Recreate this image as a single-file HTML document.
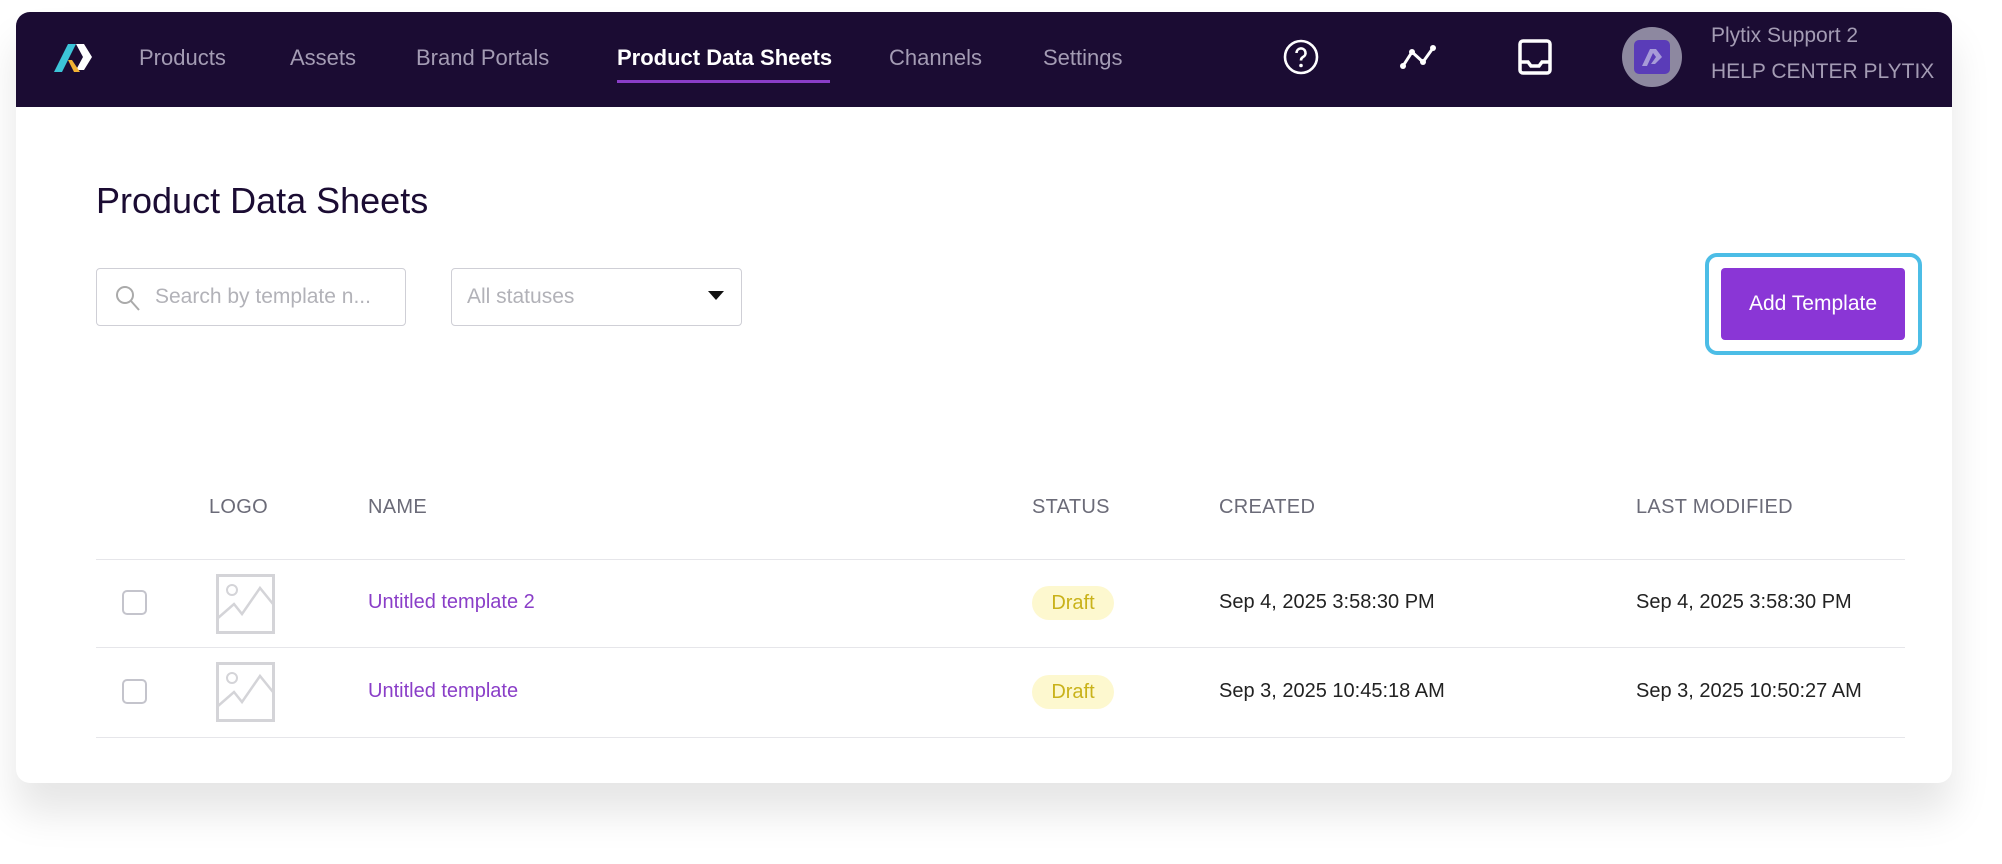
<!DOCTYPE html>
<html><head><meta charset="utf-8"><style>
*{box-sizing:border-box;margin:0;padding:0}
body{width:2002px;height:864px;background:#fff;font-family:"Liberation Sans",sans-serif;position:relative;overflow:hidden}
.card{position:absolute;left:16px;top:12px;width:1936px;height:771px;background:#fff;border-radius:14px;box-shadow:0 30px 40px rgba(0,0,0,0.10)}
.nav{position:absolute;left:16px;top:12px;width:1936px;height:95px;background:#1b0c33;border-radius:14px 14px 0 0}
.ab{position:absolute;white-space:nowrap}
.ni{font-size:22px;color:#a49cb4;top:45px}
.th{font-size:20px;color:#6b6b78;top:496px;letter-spacing:.3px}
.td{font-size:20px;color:#222;}
.line{position:absolute;left:96px;width:1809px;height:1px;background:#e6e6ea}
.cb{position:absolute;left:122px;width:25px;height:25px;border:2px solid #c4c4cc;border-radius:5px}
.draft{position:absolute;left:1032px;width:82px;height:34px;border-radius:17px;background:#fdf8cf;color:#c9b21a;font-size:20px;text-align:center;line-height:34px}
.lk{font-size:20px;color:#8a3ec8}
</style></head><body>
<div class="card"></div>
<div class="nav"></div>
<svg class="ab" style="left:52px;top:40px" width="42" height="34" viewBox="0 0 42 34"><path d="M2 32 L16 4 L24 4 L10 32Z" fill="#3cc4d8"/><path d="M24 4 L32 4 L40 17 L32 30 L24 30 L31 17Z" fill="#fff"/><path d="M16 20 L22 32 L28 32 L20 20Z" fill="#f2b233"/></svg>
<div class="ab ni" style="left:139px">Products</div>
<div class="ab ni" style="left:290px">Assets</div>
<div class="ab ni" style="left:416px">Brand Portals</div>
<div class="ab ni" style="left:617px;color:#fff;font-weight:bold">Product Data Sheets</div>
<div class="ab" style="left:617px;top:80px;width:213px;height:3px;background:#8a3ec8"></div>
<div class="ab ni" style="left:889px">Channels</div>
<div class="ab ni" style="left:1043px">Settings</div>
<svg class="ab" style="left:1282px;top:38px" width="38" height="38" viewBox="0 0 38 38"><circle cx="19" cy="19" r="16" fill="none" stroke="#fff" stroke-width="2.6"/><path d="M14.5 15a4.5 4.5 0 1 1 6.5 4c-1.5.8-2 1.8-2 3.5" fill="none" stroke="#fff" stroke-width="2.6"/><circle cx="19" cy="27.5" r="1.8" fill="#fff"/></svg>
<svg class="ab" style="left:1397px;top:40px" width="42" height="32" viewBox="0 0 42 32"><path d="M6 26 L15 12 L26 22 L36 8" fill="none" stroke="#fff" stroke-width="3" stroke-linejoin="round"/><circle cx="6" cy="26" r="3" fill="#fff"/><circle cx="15" cy="12" r="3" fill="#fff"/><circle cx="26" cy="22" r="3" fill="#fff"/><circle cx="36" cy="8" r="3" fill="#fff"/></svg>
<svg class="ab" style="left:1517px;top:38px" width="36" height="38" viewBox="0 0 36 38"><rect x="3" y="3" width="30" height="32" rx="3" fill="none" stroke="#fff" stroke-width="3.5"/><path d="M3 24h8l3 4h8l3-4h8" fill="none" stroke="#fff" stroke-width="3.5"/></svg>
<div class="ab" style="left:1622px;top:27px;width:60px;height:60px;border-radius:50%;background:#8d88a0"></div>
<div class="ab" style="left:1634px;top:40px;width:36px;height:34px;border-radius:5px;background:#5a3cb8"></div>
<svg class="ab" style="left:1640px;top:46px" width="24" height="22" viewBox="0 0 24 22"><path d="M2 20 L10 3 L16 3 L22 11 L15 18 L11 18 L16 11 L13 7 L7 20Z" fill="#a79bd8"/></svg>
<div class="ab" style="left:1711px;top:24px;font-size:21px;color:#a49cb4">Plytix Support 2</div>
<div class="ab" style="left:1711px;top:60px;font-size:21px;color:#a49cb4">HELP CENTER PLYTIX</div>

<div class="ab" style="left:96px;top:180px;font-size:36px;color:#1b0c33">Product Data Sheets</div>
<div class="ab" style="left:96px;top:268px;width:310px;height:58px;border:1px solid #cfcfd6;border-radius:4px"></div>
<svg class="ab" style="left:114px;top:284px" width="28" height="28" viewBox="0 0 28 28"><circle cx="11" cy="11" r="8" fill="none" stroke="#aaa" stroke-width="2"/><path d="M17 17l8 9" stroke="#aaa" stroke-width="2"/></svg>
<div class="ab" style="left:155px;top:285px;font-size:21px;color:#b2b2b8">Search by template n...</div>
<div class="ab" style="left:451px;top:268px;width:291px;height:58px;border:1px solid #cfcfd6;border-radius:4px"></div>
<div class="ab" style="left:467px;top:285px;font-size:21px;color:#b2b2b8">All statuses</div>
<div class="ab" style="left:708px;top:291px;width:0;height:0;border-left:8px solid transparent;border-right:8px solid transparent;border-top:9px solid #111"></div>
<div class="ab" style="left:1705px;top:253px;width:217px;height:102px;border:4px solid #4cbde6;border-radius:12px"></div>
<div class="ab" style="left:1721px;top:268px;width:184px;height:72px;background:#8a36d6;border-radius:4px;color:#fff;font-size:21px;text-align:center;line-height:72px">Add Template</div>

<div class="ab th" style="left:209px">LOGO</div>
<div class="ab th" style="left:368px">NAME</div>
<div class="ab th" style="left:1032px">STATUS</div>
<div class="ab th" style="left:1219px">CREATED</div>
<div class="ab th" style="left:1636px">LAST MODIFIED</div>
<div class="line" style="top:559px"></div>
<div class="line" style="top:647px"></div>
<div class="line" style="top:737px"></div>

<div class="cb" style="top:590px"></div>
<svg class="ab" style="left:216px;top:574px" width="59" height="60" viewBox="0 0 59 60"><rect x="1.5" y="1.5" width="56" height="57" fill="none" stroke="#d4d4d8" stroke-width="3"/><circle cx="16" cy="16" r="5" fill="none" stroke="#d4d4d8" stroke-width="2"/><path d="M2 44 L18 30 L26 40 L44 14 L57 30" fill="none" stroke="#d4d4d8" stroke-width="2.5"/></svg>
<div class="ab lk" style="left:368px;top:591px">Untitled template 2</div>
<div class="draft" style="top:586px">Draft</div>
<div class="ab td" style="left:1219px;top:591px">Sep 4, 2025 3:58:30 PM</div>
<div class="ab td" style="left:1636px;top:591px">Sep 4, 2025 3:58:30 PM</div>

<div class="cb" style="top:679px"></div>
<svg class="ab" style="left:216px;top:662px" width="59" height="60" viewBox="0 0 59 60"><rect x="1.5" y="1.5" width="56" height="57" fill="none" stroke="#d4d4d8" stroke-width="3"/><circle cx="16" cy="16" r="5" fill="none" stroke="#d4d4d8" stroke-width="2"/><path d="M2 44 L18 30 L26 40 L44 14 L57 30" fill="none" stroke="#d4d4d8" stroke-width="2.5"/></svg>
<div class="ab lk" style="left:368px;top:680px">Untitled template</div>
<div class="draft" style="top:675px">Draft</div>
<div class="ab td" style="left:1219px;top:680px">Sep 3, 2025 10:45:18 AM</div>
<div class="ab td" style="left:1636px;top:680px">Sep 3, 2025 10:50:27 AM</div>
</body></html>
